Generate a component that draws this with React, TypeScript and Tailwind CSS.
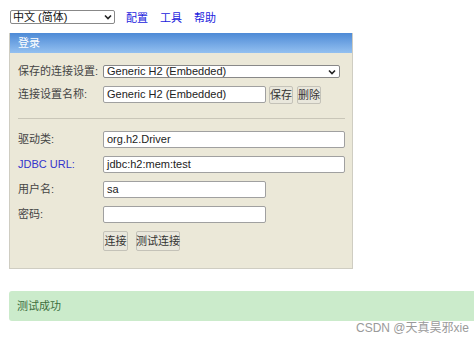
const cjk = "font-['Liberation_Sans','Noto_Sans_CJK_SC',sans-serif]";

const Field: React.FC<{ label: string; value?: string; wide?: boolean; blue?: boolean }> = ({
  label,
  value = "",
  wide,
  blue,
}) => (
  <div className="flex items-center h-[17px] mb-[8px]">
    <span className={`w-[85px] whitespace-nowrap text-[11px] ${blue ? "text-[#3333cc]" : "text-[#444]"}`}>{label}</span>
    <div
      className={`h-[17px] bg-white border border-[#a0a0a0] rounded-[2px] px-[3px] text-[11px] leading-[15px] text-[#222] ${
        wide ? "w-[242px]" : "w-[163px]"
      }`}
    >
      {value}
    </div>
  </div>
);

const Btn: React.FC<{ children: React.ReactNode; w: string; h: string }> = ({ children, w, h }) => (
  <button
    className={`${w} ${h} flex items-center justify-center whitespace-nowrap p-0 bg-[#e9e7dc] border border-[#c4c2b8] rounded-[2px] text-[11px] text-[#333]`}
  >
    {children}
  </button>
);

export default function App() {
  return (
    <div className={`relative w-[474px] h-[339px] overflow-hidden bg-white ${cjk}`}>
      <div className="flex items-center pt-[10px] pl-[10px] h-[24px]">
        <div className="w-[105px] h-[14px] border border-[#888] rounded-[2px] bg-white flex items-center justify-between px-[2px] text-[11px] text-[#111] whitespace-nowrap">
          <span>中文 (简体)</span>
          <svg width="8" height="6" viewBox="0 0 8 6">
            <path d="M1 1.5 L4 4.5 L7 1.5" fill="none" stroke="#222" strokeWidth="1.6" />
          </svg>
        </div>
        <div className="flex gap-[12px] ml-[11px] text-[11px] text-[#2222dd] pt-[2px]">
          <span>配置</span>
          <span>工具</span>
          <span>帮助</span>
        </div>
      </div>

      <div className="ml-[9px] mt-[9px] w-[344px] h-[236px] bg-[#ebe8d8] border border-[#cfcdc2] border-t-0">
        <div className="h-[20px] bg-gradient-to-b from-[#4d8ad6] to-[#93c0f0] text-white text-[11px] pl-[8px] flex items-center">
          登录
        </div>
        <div className="pl-[8px] pt-[12px]">
          <div className="flex items-center h-[13px] mb-[8px]">
            <span className="w-[85px] whitespace-nowrap text-[11px] text-[#444]">保存的连接设置:</span>
            <div className="w-[237px] h-[13px] bg-white border border-[#888] rounded-[2px] flex items-center justify-between px-[3px] text-[11px] text-[#222]">
              <span>Generic H2 (Embedded)</span>
              <svg width="8" height="6" viewBox="0 0 8 6">
                <path d="M1 1.5 L4 4.5 L7 1.5" fill="none" stroke="#222" strokeWidth="1.6" />
              </svg>
            </div>
          </div>
          <div className="flex items-start h-[18px]">
            <span className="w-[85px] whitespace-nowrap text-[11px] text-[#444]">连接设置名称:</span>
            <div className="w-[163px] h-[17px] bg-white border border-[#a0a0a0] rounded-[2px] px-[3px] text-[11px] leading-[15px] text-[#222]">
              Generic H2 (Embedded)
            </div>
            <div className="flex gap-[4px] ml-[3px]">
              <Btn w="w-[24px]" h="h-[18px]">保存</Btn>
              <Btn w="w-[24px]" h="h-[18px]">删除</Btn>
            </div>
          </div>
          <div className="w-[327px] border-t border-[#c9c6b8] mt-[14px] mb-[12px]" />
          <Field label="驱动类:" value="org.h2.Driver" wide />
          <Field label="JDBC URL:" value="jdbc:h2:mem:test" wide blue />
          <Field label="用户名:" value="sa" />
          <Field label="密码:" />
          <div className="flex gap-[8px] ml-[85px]">
            <Btn w="w-[25px]" h="h-[20px]">连接</Btn>
            <Btn w="w-[44px]" h="h-[20px]">测试连接</Btn>
          </div>
        </div>
      </div>

      <div className="ml-[9px] mt-[22px] w-[480px] h-[30px] bg-[#cbebcb] rounded-[3px] flex items-center pl-[8px] text-[11px] text-[#3d6e3d]">
        测试成功
      </div>

      <div className="absolute left-[356px] top-[319px] text-[12px] text-[#9a9a9a] whitespace-nowrap">
        CSDN @天真昊邪xie
      </div>
    </div>
  );
}
